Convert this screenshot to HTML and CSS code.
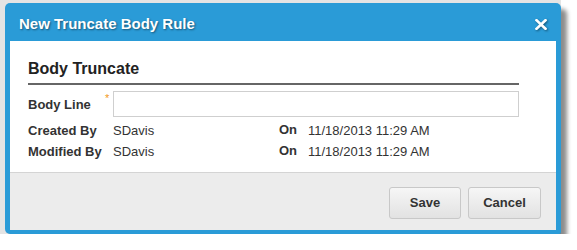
FILE: index.html
```html
<!DOCTYPE html>
<html lang="en">
<head>
    <meta charset="UTF-8">
    <title>New Truncate Body Rule</title>
    <link rel="stylesheet" href="styles.css">
</head>
<body>
    <div class="backdrop">
        <div class="dialog">
            <div class="dialogHeader">
                <span class="dialogTitle">New Truncate Body Rule</span>
                <svg class="closeBtn" width="12" height="11" viewBox="0 0 12 11">
                    <path d="M1.5 1.2 L10.5 9.8 M10.5 1.2 L1.5 9.8" stroke="#fff" stroke-width="2.6" stroke-linecap="square" />
                </svg>
            </div>
            <div class="dialogBody">
                <h2 class="sectionTitle">Body Truncate</h2>
                <div class="formRow">
                    <label class="fieldLabel">Body Line</label>
                    <span class="required">*</span>
                    <input class="textInput" type="text">
                </div>
                <div class="infoRow">
                    <span class="fieldLabel">Created By</span>
                    <span class="infoValue">SDavis</span>
                    <span class="onLabel">On</span>
                    <span class="infoValue">11/18/2013 11:29 AM</span>
                </div>
                <div class="infoRow">
                    <span class="fieldLabel">Modified By</span>
                    <span class="infoValue">SDavis</span>
                    <span class="onLabel">On</span>
                    <span class="infoValue">11/18/2013 11:29 AM</span>
                </div>
            </div>
            <div class="dialogFooter">
                <button class="btn">Save</button>
                <button class="btn">Cancel</button>
            </div>
        </div>
    </div>
</body>
</html>
```

FILE: styles.css
```css
body {
    margin: 0;
    background: #fff;
    font-family: "Liberation Sans", Arial, sans-serif;
    color: #333;
}

.backdrop {
    display: inline-block;
    background: #e4e4e4;
    padding: 3px 0 0 5px;
}

.dialog {
    width: 546px;
    background: #2a9bd7;
    padding: 0 5px 4px 5px;
    border-radius: 5px 5px 2px 5px;
    box-shadow: 6px 6px 4px rgba(0, 0, 0, 0.45);
}

.dialogHeader {
    height: 38px;
    display: flex;
    align-items: center;
    justify-content: space-between;
    padding: 0 9px 0 9px;
    color: #fff;
}

.dialogTitle {
    font-size: 15px;
    font-weight: bold;
    text-shadow: 1px 1px 2px rgba(0, 0, 0, 0.45);
    margin-top: 2px;
}

.closeBtn {
    display: block;
    margin-top: 4px;
    filter: drop-shadow(1px 1px 1px rgba(0, 0, 0, 0.45));
}

.dialogBody {
    background: #fff;
    padding: 17px 37px 10px 18px;
    border-bottom: 1px solid #d4d4d4;
}

.sectionTitle {
    margin: 0;
    font-size: 16px;
    font-weight: bold;
    line-height: 22px;
    color: #222;
    padding-bottom: 3px;
    border-bottom: 2px solid #666;
}

.formRow {
    display: flex;
    align-items: center;
    margin-top: 6px;
    height: 26px;
}

.fieldLabel {
    width: 77px;
    font-size: 13px;
    font-weight: bold;
    color: #333;
}

.required {
    width: 8px;
    color: #f39a1a;
    font-size: 11px;
    align-self: flex-start;
    margin-top: 1px;
}

.textInput {
    flex: 1;
    height: 26px;
    box-sizing: border-box;
    border: 1px solid #cfcfcf;
    padding: 2px 5px;
    font: inherit;
}

.infoRow {
    display: flex;
    align-items: center;
    font-size: 13px;
    height: 21px;
}

.formRow + .infoRow {
    margin-top: 3px;
}

.infoRow .fieldLabel {
    width: 85px;
}

.infoValue {
    color: #333;
}

.infoRow .infoValue:nth-child(2) {
    width: 166px;
}

.onLabel {
    font-weight: bold;
    width: 29px;
    margin-top: -3px;
}

.dialogFooter {
    background: #ececec;
    height: 57px;
    display: flex;
    justify-content: flex-end;
    align-items: center;
    gap: 7px;
    padding: 0 15px 0 0;
}

.btn {
    height: 32px;
    width: 72px;
    border: 1px solid #c8c8c8;
    border-radius: 3px;
    background: linear-gradient(#f6f6f6, #e2e2e2);
    font-family: "Liberation Sans", Arial, sans-serif;
    font-size: 13px;
    font-weight: bold;
    color: #333;
    margin-top: 2px;
}

.btn + .btn {
    width: 73px;
}
```
